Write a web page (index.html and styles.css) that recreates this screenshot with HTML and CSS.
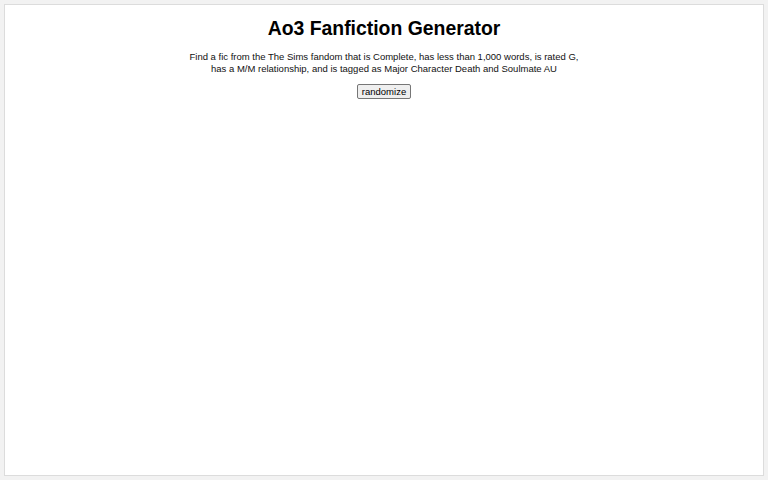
FILE: index.html
```html
<!DOCTYPE html>
<html lang="en">
<head>
<meta charset="utf-8">
<title>Ao3 Fanfiction Generator</title>
<link rel="stylesheet" href="styles.css">
</head>
<body>
<main class="panel">
  <h1 class="title">Ao3 Fanfiction Generator</h1>
  <p class="prompt">Find a fic from the The Sims fandom that is Complete, has less than 1,000 words, is rated G,<br>has a M/M relationship, and is tagged as Major Character Death and Soulmate AU</p>
  <button class="randomize" type="button">randomize</button>
</main>
</body>
</html>
```

FILE: styles.css
```css
html, body {
  height: 100%;
}

body {
  margin: 0;
  padding: 4px;
  box-sizing: border-box;
  background: #f2f2f2;
  font-family: "Liberation Sans", Arial, sans-serif;
  color: #000;
}

.panel {
  box-sizing: border-box;
  height: 100%;
  background: #fff;
  border: 1px solid #dcdcdc;
  display: flex;
  flex-direction: column;
  align-items: center;
  text-align: center;
}

.title {
  margin: 11px 0 0;
  font-size: 19.4px;
  font-weight: bold;
  line-height: 24px;
}

.prompt {
  margin: 11px 0 0;
  font-size: 9.5px;
  line-height: 12px;
  color: #111;
}

.randomize {
  margin-top: 9px;
  font-family: "Liberation Sans", Arial, sans-serif;
  font-size: 9.5px;
  line-height: 11px;
  padding: 1px 4px;
  background: #efefef;
  border: 1px solid #767676;
  border-radius: 2px;
  color: #000;
}
```
